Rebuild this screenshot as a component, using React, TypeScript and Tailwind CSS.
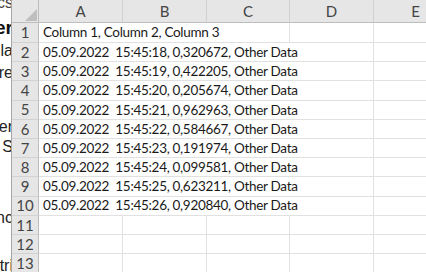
const leftLines = [
  { text: 'Docs', cls: 'mt-[-6px] text-[#444]' },
  { text: 'Header', cls: 'mt-[7px] font-bold text-[19px] text-[#111]' },
  { text: 'Simla', cls: 'mt-[5px] text-[#222]' },
  { text: 'Where', cls: 'mt-[4px] text-[#222]' },
  { text: 'Other', cls: 'mt-[36px] text-[#222]' },
  { text: 'use S', cls: 'mt-[2px] text-[#222]', blue: true },
  { text: 'Func', cls: 'mt-[53px] text-[#222]' },
  { text: 'Stri', cls: 'mt-[30px] text-[#222]' },
];

const dataRows = [
  '05.09.2022  15:45:18, 0,320672, Other Data',
  '05.09.2022  15:45:19, 0,422205, Other Data',
  '05.09.2022  15:45:20, 0,205674, Other Data',
  '05.09.2022  15:45:21, 0,962963, Other Data',
  '05.09.2022  15:45:22, 0,584667, Other Data',
  '05.09.2022  15:45:23, 0,191974, Other Data',
  '05.09.2022  15:45:24, 0,099581, Other Data',
  '05.09.2022  15:45:25, 0,623211, Other Data',
  '05.09.2022  15:45:26, 0,920840, Other Data',
];

const columns = [
  { name: 'A', w: 'w-[84px]' },
  { name: 'B', w: 'w-[84px]' },
  { name: 'C', w: 'w-[83px]' },
  { name: 'D', w: 'w-[84px]' },
  { name: 'E', w: 'w-[84px]' },
];

function RowHead({ n }: { n: number }) {
  return (
    <div className="flex w-[27px] shrink-0 items-center justify-center border-r border-b border-r-[#bdbdbd] border-b-[#d2d2d2] bg-[#e6e6e6] text-[15px] text-[#444]">
      {n}
    </div>
  );
}

function Cell({ w, children }: { w: string; children?: React.ReactNode }) {
  return (
    <div
      className={`${w} flex shrink-0 items-center whitespace-pre border-r border-b border-[#e1e1e1] pl-[4px] text-[13.5px] tracking-[-0.3px] text-[#1a1a1a]`}
    >
      {children}
    </div>
  );
}

export default function App() {
  return (
    <div className="flex h-[272px] w-[426px] overflow-hidden bg-white">
      {/* page behind the sheet */}
      <div className="flex w-[11px] shrink-0 flex-col overflow-hidden font-['Liberation_Sans',Arial,sans-serif] text-[16px]">
        {leftLines.map((l, i) => (
          <div key={i} className={`flex h-[18px] shrink-0 justify-end whitespace-nowrap leading-[18px] ${l.cls}`}>
            <span className="mr-[-2px]">
              {l.blue ? (
                <>
                  <span className="text-[#3b9be0]">us</span>
                  <span>e S</span>
                </>
              ) : (
                l.text
              )}
            </span>
          </div>
        ))}
      </div>

      {/* spreadsheet */}
      <div className="flex min-w-0 flex-1 flex-col overflow-hidden border-l border-[#a6a6a6] font-['Lato',sans-serif] text-[14px]">
        <div className="flex h-[23px] shrink-0 bg-[#e6e6e6]">
          <div className="flex w-[27px] shrink-0 items-end justify-end border-r border-b border-[#bdbdbd] pr-[1px] pb-[1px]">
            <svg width="12" height="12" viewBox="0 0 12 12">
              <polygon points="12,0 12,12 0,12" fill="#bfbfbf" />
            </svg>
          </div>
          {columns.map((c) => (
            <div
              key={c.name}
              className={`${c.w} flex shrink-0 items-center justify-center border-r border-b border-r-[#d0d0d0] border-b-[#bdbdbd] text-[15px] text-[#444]`}
            >
              {c.name}
            </div>
          ))}
        </div>

        <div className="flex h-[20px] shrink-0">
          <RowHead n={1} />
          <Cell w="w-[251px]">Column 1, Column 2, Column 3</Cell>
          <Cell w="w-[84px]" />
          <Cell w="w-[84px]" />
        </div>

        {dataRows.map((r, i) => (
          <div key={i} className="flex h-[19.2px] shrink-0">
            <RowHead n={i + 2} />
            <Cell w="w-[335px]">{r}</Cell>
            <Cell w="w-[84px]" />
          </div>
        ))}

        {[11, 12, 13].map((n) => (
          <div key={n} className="flex h-[19.2px] shrink-0">
            <RowHead n={n} />
            {columns.map((c) => (
              <Cell key={c.name} w={c.w} />
            ))}
          </div>
        ))}
      </div>
    </div>
  );
}
